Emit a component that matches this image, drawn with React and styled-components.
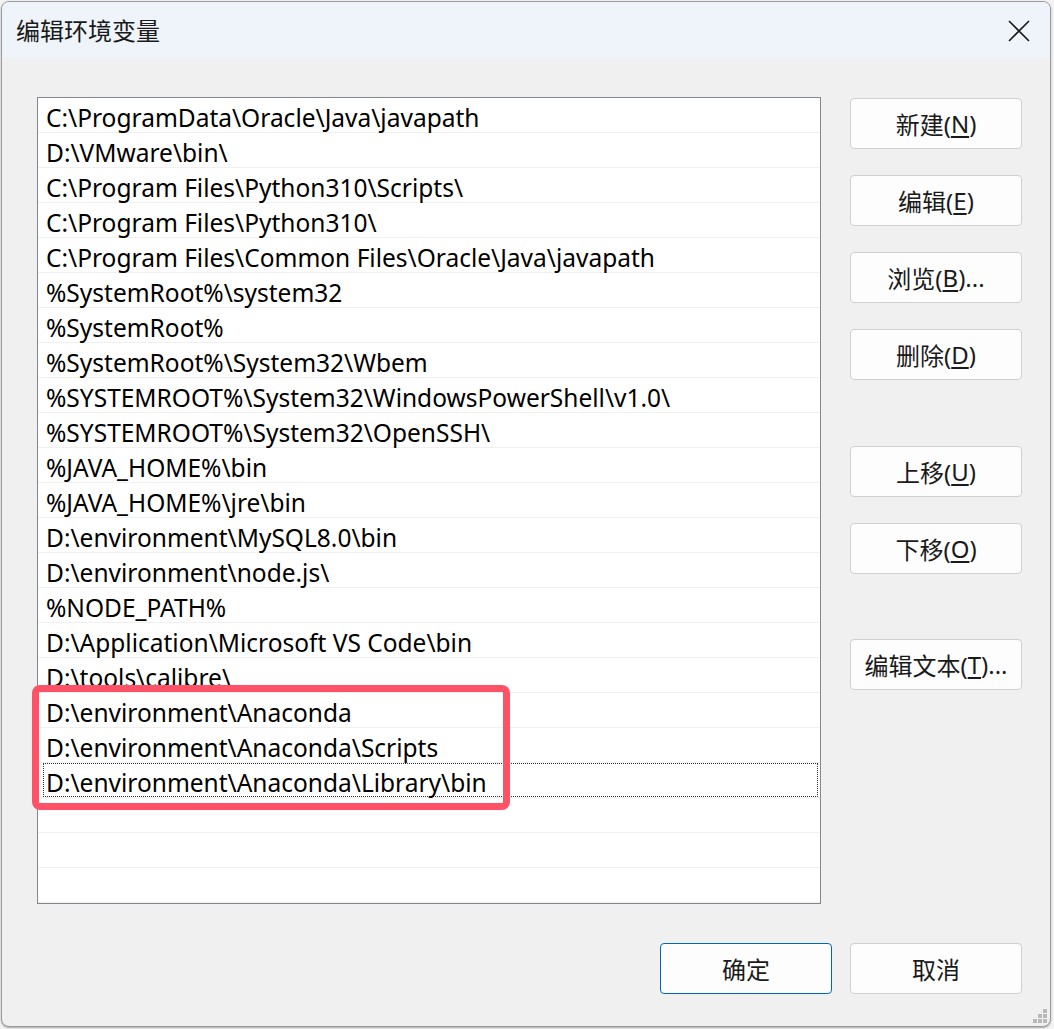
import React from "react";
import styled, { createGlobalStyle } from "styled-components";

const Global = createGlobalStyle`
  html, body { margin: 0; padding: 0; }
  body {
    background: #f3f3f3;
    font-family: "Noto Sans", "Noto Sans CJK SC", sans-serif;
    color: #000;
  }
  * { box-sizing: border-box; }
`;

const Page = styled.div`
  width: 1054px;
  height: 1029px;
  padding: 1px 0 0 1px;
`;

const Window = styled.div`
  position: relative;
  width: 1050px;
  height: 1026px;
  border: 1px solid #9a9a9a;
  border-radius: 8px;
  overflow: hidden;
  background: #f0f0f0;
  display: flex;
  flex-direction: column;
  box-shadow: 0 1px 2px rgba(0, 0, 0, 0.3);
`;

const TitleBar = styled.div`
  height: 56px;
  flex: none;
  background: #eef4f9;
  display: flex;
  align-items: center;
  justify-content: space-between;
  padding: 0 20px 2px 14px;
`;

const Title = styled.div`
  font-family: "Noto Sans CJK SC", sans-serif;
  font-size: 24px;
  color: #1a1a1a;
`;

const CloseIcon = styled.svg`
  width: 22px;
  height: 22px;
  display: block;
  margin-top: 3px;
`;

const Content = styled.div`
  display: grid;
  grid-template-columns: 784px 172px;
  column-gap: 29px;
  padding: 39px 28px 0 35px;
`;

const ListWrap = styled.div`
  position: relative;
`;

const List = styled.div`
  height: 807px;
  border: 1px solid #828790;
  background: #fff;
  display: flex;
  flex-direction: column;
`;

const Row = styled.div`
  height: 35px;
  flex: none;
  border-bottom: 1px solid #f0f0f0;
  padding: 0 2px 0 5px;
  display: flex;
`;

const RowLabel = styled.div`
  flex: 1;
  height: 34px;
  padding: 4px 0 0 3px;
  line-height: 30px;
  font-size: 24.5px;
  white-space: nowrap;
  border: 1px dotted ${(p) => (p.$focused ? "#333" : "transparent")};
  border-left-width: 1px;
  padding-left: 2px;
`;

const Highlight = styled.div`
  position: absolute;
  left: -5px;
  top: 588px;
  width: 478px;
  height: 125px;
  border: 7px solid #ff5267;
  border-radius: 8px;
  pointer-events: none;
`;

const SideButtons = styled.div`
  display: flex;
  flex-direction: column;
  padding-top: 1px;
`;

const Button = styled.button`
  width: 172px;
  height: 51px;
  flex: none;
  margin-top: ${(p) => p.$gap ?? 0}px;
  border: 1px solid ${(p) => (p.$primary ? "#0067c0" : "#d0d0d0")};
  border-radius: 4px;
  background: #fdfdfd;
  font-family: "Noto Sans", "Noto Sans CJK SC", sans-serif;
  font-size: 24px;
  color: #1a1a1a;
  padding: 0;
  display: flex;
  align-items: center;
  justify-content: center;
  white-space: nowrap;
  cursor: default;
`;

const Key = styled.span`
  text-decoration: underline;
  text-decoration-thickness: 1.5px;
  text-underline-offset: 3px;
`;

const Footer = styled.div`
  display: flex;
  justify-content: flex-end;
  gap: 18px;
  padding: 39px 28px 0 0;
`;

const Grip = styled.svg`
  position: absolute;
  right: 3px;
  bottom: 3px;
  width: 14px;
  height: 14px;
`;

const paths = [
  "C:\\ProgramData\\Oracle\\Java\\javapath",
  "D:\\VMware\\bin\\",
  "C:\\Program Files\\Python310\\Scripts\\",
  "C:\\Program Files\\Python310\\",
  "C:\\Program Files\\Common Files\\Oracle\\Java\\javapath",
  "%SystemRoot%\\system32",
  "%SystemRoot%",
  "%SystemRoot%\\System32\\Wbem",
  "%SYSTEMROOT%\\System32\\WindowsPowerShell\\v1.0\\",
  "%SYSTEMROOT%\\System32\\OpenSSH\\",
  "%JAVA_HOME%\\bin",
  "%JAVA_HOME%\\jre\\bin",
  "D:\\environment\\MySQL8.0\\bin",
  "D:\\environment\\node.js\\",
  "%NODE_PATH%",
  "D:\\Application\\Microsoft VS Code\\bin",
  "D:\\tools\\calibre\\",
  "D:\\environment\\Anaconda",
  "D:\\environment\\Anaconda\\Scripts",
  "D:\\environment\\Anaconda\\Library\\bin",
  "",
  "",
  "",
];

const sideButtons = [
  { label: "新建", key: "N", gap: 0 },
  { label: "编辑", key: "E", gap: 26 },
  { label: "浏览", key: "B", tail: "...", gap: 26 },
  { label: "删除", key: "D", gap: 26 },
  { label: "上移", key: "U", gap: 66 },
  { label: "下移", key: "O", gap: 26 },
  { label: "编辑文本", key: "T", tail: "...", gap: 65 },
];

export default function App() {
  return (
    <>
      <Global />
      <Page>
        <Window>
          <TitleBar>
            <Title>编辑环境变量</Title>
            <CloseIcon viewBox="0 0 22 22">
              <path d="M1 1 L21 21 M21 1 L1 21" stroke="#1a1a1a" strokeWidth="1.6" fill="none" />
            </CloseIcon>
          </TitleBar>
          <Content>
            <ListWrap>
              <List>
                {paths.map((p, i) => (
                  <Row key={i}>
                    <RowLabel $focused={i === 19}>{p}</RowLabel>
                  </Row>
                ))}
              </List>
              <Highlight />
            </ListWrap>
            <SideButtons>
              {sideButtons.map((b) => (
                <Button key={b.key} $gap={b.gap}>
                  {b.label}(<Key>{b.key}</Key>){b.tail || ""}
                </Button>
              ))}
            </SideButtons>
          </Content>
          <Footer>
            <Button $primary>确定</Button>
            <Button>取消</Button>
          </Footer>
          <Grip viewBox="0 0 14 14">
            {[
              [10, 0],
              [5, 5],
              [10, 5],
              [0, 10],
              [5, 10],
              [10, 10],
            ].map(([x, y], i) => (
              <rect key={i} x={x} y={y} width="4" height="4" fill="#b9b9b9" />
            ))}
          </Grip>
        </Window>
      </Page>
    </>
  );
}
